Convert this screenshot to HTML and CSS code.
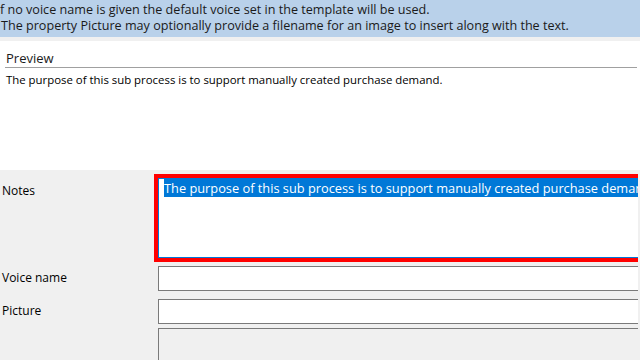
FILE: index.html
```html
<!DOCTYPE html>
<html lang="en">
<head>
  <meta charset="UTF-8">
  <meta name="viewport" content="width=device-width, initial-scale=1.0">
  <title>Voice Properties</title>
  <link rel="stylesheet" href="styles.css">
</head>
<body>
  <div class="banner">
    <div>f no voice name is given the default voice set in the template will be used.</div>
    <div>The property Picture may optionally provide a filename for an image to insert along with the text.</div>
  </div>

  <div class="preview">
    <div class="preview-title">Preview</div>
    <div class="preview-text">The purpose of this sub process is to support manually created purchase demand.</div>
  </div>

  <div class="form">
    <div class="label notes-label">Notes</div>
    <div class="field">
      <div class="notes"><span class="selected">The purpose of this sub process is to support manually created purchase demand.</span></div>
    </div>

    <div class="label">Voice name</div>
    <div class="field">
      <div class="input"></div>
    </div>

    <div class="label">Picture</div>
    <div class="field stack">
      <div class="input"></div>
      <div class="input disabled"></div>
    </div>
  </div>
</body>
</html>
```

FILE: styles.css
```css
body {
  margin: 0;
  width: 640px;
  height: 360px;
  overflow: hidden;
  background-color: #f0f0f0;
  font-family: 'Open Sans', 'Noto Sans', sans-serif;
  font-size: 12px;
  line-height: 16px;
  color: #000000;
}

.banner {
  background-color: #b9d1ea;
  color: #1a1a1a;
  font-size: 12.6px;
  padding: 2px 0 3px 0;
  border-bottom: 4px solid #f0f0f0;
  white-space: nowrap;
}

.banner div:last-child {
  padding-left: 1px;
}

.preview {
  background-color: #ffffff;
  height: 129px;
  padding: 9px 3px 0 5px;
  box-sizing: border-box;
}

.preview-title {
  font-size: 13px;
  padding: 0 0 1px 1px;
  border-bottom: 1px solid #a0a0a0;
  color: #1a1a1a;
}

.preview-text {
  font-size: 11.4px;
  margin-top: 4px;
  padding-left: 1px;
  white-space: nowrap;
}

.form {
  display: grid;
  grid-template-columns: 158px 1fr;
  row-gap: 8px;
  padding: 8px 0 40px 0;
  margin-right: 2px;
  overflow: hidden;
}

.label {
  padding: 4px 0 0 2px;
}

.notes-label {
  padding-top: 5px;
}

.field {
  min-width: 0;
}

.stack {
  display: flex;
  flex-direction: column;
  gap: 4px;
}

.notes {
  width: 600px;
  height: 80px;
  box-sizing: border-box;
  background-color: #ffffff;
  border: 1px solid #0078d7;
  outline: 4px solid #ff0000;
  padding: 1px 5px;
  font-size: 12.8px;
  white-space: nowrap;
  line-height: 17px;
}

.selected {
  background-color: #0078d7;
  color: #ffffff;
}

.input {
  width: 600px;
  height: 25px;
  box-sizing: border-box;
  background-color: #ffffff;
  border: 1px solid #7a7a7a;
}

.input.disabled {
  height: 60px;
  background-color: #f0f0f0;
}
```
